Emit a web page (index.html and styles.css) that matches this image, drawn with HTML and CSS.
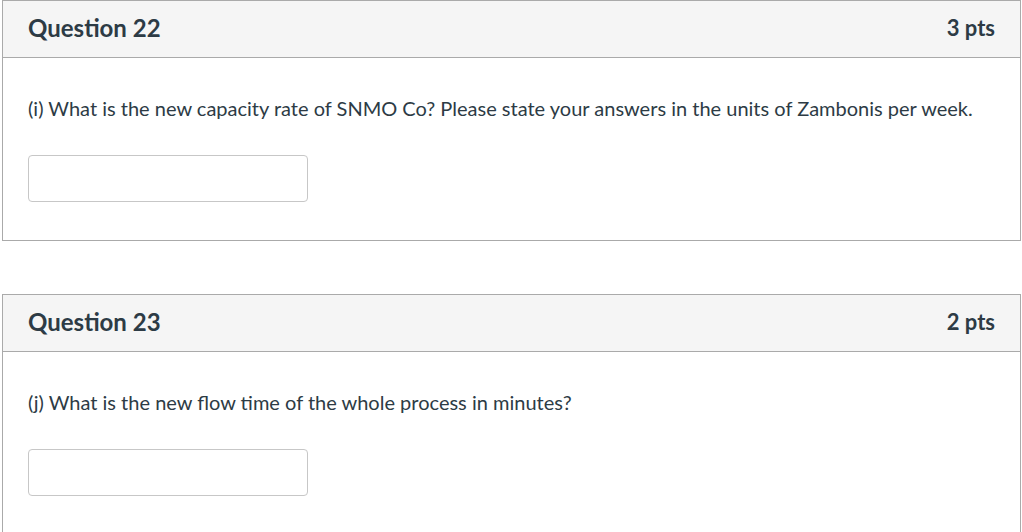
FILE: index.html
```html
<!DOCTYPE html>
<html>
<head>
<meta charset="utf-8">
<link rel="stylesheet" href="styles.css">
</head>
<body>
<div class="quiz">
  <div class="question">
    <div class="q-header">
      <span class="q-name">Question 22</span>
      <span class="q-pts">3 pts</span>
    </div>
    <div class="q-body">
      <p class="q-text">(i) What is the new capacity rate of SNMO Co? Please state your answers in the units of Zambonis per week.</p>
      <input class="q-input" type="text">
    </div>
  </div>
  <div class="question">
    <div class="q-header">
      <span class="q-name">Question 23</span>
      <span class="q-pts">2 pts</span>
    </div>
    <div class="q-body">
      <p class="q-text">(j) What is the new flow time of the whole process in minutes?</p>
      <input class="q-input" type="text">
    </div>
  </div>
</div>
</body>
</html>
```
FILE: styles.css
```css
html, body {
  margin: 0;
  padding: 0;
  background: #ffffff;
}
body {
  font-family: Lato, "Open Sans", sans-serif;
  color: #2d3b45;
}
.quiz {
  display: flex;
  flex-direction: column;
  gap: 53px;
  padding-left: 2px;
  width: 1019px;
}
.question {
  border: 1px solid #aaaaaa;
  background: #ffffff;
}
.q-header {
  display: flex;
  justify-content: space-between;
  align-items: center;
  height: 56px;
  padding: 0 25px;
  background: #f5f5f5;
  border-bottom: 1px solid #aaaaaa;
}
.q-name, .q-pts {
  font-weight: bold;
  font-size: 24px;
  line-height: 28px;
  color: #2d3b45;
  margin-top: -3px;
}
.q-pts {
  font-size: 22px;
}
.q-body {
  padding: 37px 25px 38px;
}
.q-text {
  margin: 0 0 34px;
  font-size: 20px;
  line-height: 26px;
  color: #2d3b45;
}
.q-input {
  display: block;
  box-sizing: border-box;
  width: 280px;
  height: 47px;
  margin: 0;
  border: 1px solid #c7c7c7;
  border-radius: 4px;
  background: #fff;
}
```
